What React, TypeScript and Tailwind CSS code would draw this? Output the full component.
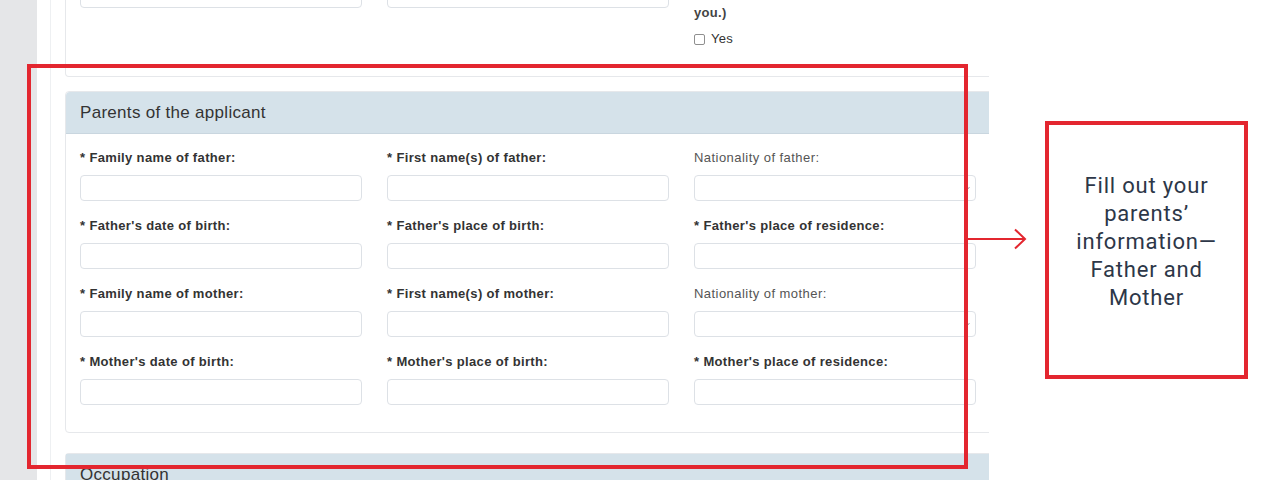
import React from "react";

type Field = {
    label: string;
    required?: boolean;
    select?: boolean;
};

const rows: Field[][] = [
    [
        { label: "Family name of father:", required: true },
        { label: "First name(s) of father:", required: true },
        { label: "Nationality of father:", select: true },
    ],
    [
        { label: "Father's date of birth:", required: true },
        { label: "Father's place of birth:", required: true },
        { label: "Father's place of residence:", required: true },
    ],
    [
        { label: "Family name of mother:", required: true },
        { label: "First name(s) of mother:", required: true },
        { label: "Nationality of mother:", select: true },
    ],
    [
        { label: "Mother's date of birth:", required: true },
        { label: "Mother's place of birth:", required: true },
        { label: "Mother's place of residence:", required: true },
    ],
];

function FormField({ label, required, select }: Field) {
    return (
        <div className="flex flex-col">
            <label
                className={
                    required
                        ? "h-[18px] text-[13px] leading-[18px] font-bold tracking-[0.35px] whitespace-nowrap text-[#333]"
                        : "h-[18px] text-[13px] leading-[18px] tracking-[0.45px] whitespace-nowrap text-[#555]"
                }
            >
                {required ? "* " : ""}
                {label}
            </label>
            <div className="relative mt-2 h-[26px] rounded-[4px] border border-[#dde1e6] bg-white">
                {select && (
                    <svg
                        className="absolute top-[10px] right-[5px]"
                        width="6"
                        height="5"
                        viewBox="0 0 6 5"
                    >
                        <path
                            d="M0.5 1 L3 4 L5.5 1"
                            fill="none"
                            stroke="#9aa0a6"
                            strokeWidth="1"
                        />
                    </svg>
                )}
            </div>
        </div>
    );
}

export default function App() {
    return (
        <div
            className="relative flex h-[480px] w-[1272px] overflow-hidden bg-white"
            style={{ fontFamily: '"Liberation Sans", Arial, sans-serif' }}
        >
            {/* side strip */}
            <div className="w-[37px] shrink-0 bg-[#e5e6e8]" />
            <div className="w-[13px] shrink-0" />
            <div className="flex w-[939px] shrink-0 flex-col overflow-hidden border-l border-[#eef0f2] pl-[14px]">
                {/* previous card (cut off) */}
                <div className="mt-[-61px] w-[940px] rounded-b-[4px] border border-t-0 border-[#e6e8eb]">
                    <div className="grid grid-cols-[282px_282px_282px] gap-x-[25px] px-[14px] pt-[43px]">
                        <div className="h-[26px] rounded-[4px] border border-[#dde1e6]" />
                        <div className="h-[26px] rounded-[4px] border border-[#dde1e6]" />
                        <div className="pt-[22px]">
                            <div className="text-[13px] leading-[18px] font-bold tracking-[0.3px] text-[#444]">
                                you.)
                            </div>
                            <div className="mt-[8px] flex items-center gap-[6px]">
                                <span className="h-[11px] w-[11px] rounded-[2px] border border-[#8f8f8f] bg-white" />
                                <span className="text-[13px] leading-[18px] tracking-[0.3px] text-[#333]">
                                    Yes
                                </span>
                            </div>
                        </div>
                    </div>
                    <div className="h-[28px]" />
                </div>

                {/* parents card */}
                <div className="mt-[14px] w-[940px] rounded-[4px] border border-[#e6e8eb]">
                    <div className="flex h-[42px] items-center rounded-t-[4px] border-b border-[#c9d6df] bg-[#d5e2ea] px-[14px] text-[17px] tracking-[0.3px] text-[#333]">
                        Parents of the applicant
                    </div>
                    <div className="flex flex-col gap-[16px] px-[14px] pt-[15px] pb-[27px]">
                        {rows.map((row, i) => (
                            <div
                                key={i}
                                className="grid grid-cols-[282px_282px_282px] gap-x-[25px]"
                            >
                                {row.map((f) => (
                                    <FormField key={f.label} {...f} />
                                ))}
                            </div>
                        ))}
                    </div>
                </div>

                {/* next card (cut off) */}
                <div className="mt-[20px] w-[940px] rounded-t-[4px] border border-b-0 border-[#e6e8eb]">
                    <div className="flex h-[42px] items-center bg-[#d5e2ea] px-[14px] text-[17px] tracking-[0.3px] text-[#333]">
                        Occupation
                    </div>
                </div>
            </div>

            {/* highlight */}
            <div className="absolute top-[64px] left-[27px] h-[405px] w-[941px] border-4 border-[#e3262f]" />
            <svg
                className="absolute top-[228px] left-[968px]"
                width="62"
                height="22"
                viewBox="0 0 62 22"
            >
                <path d="M0 11 H57" stroke="#e3262f" strokeWidth="2" />
                <path
                    d="M47 1.5 L57 11 L47 20.5"
                    fill="none"
                    stroke="#e3262f"
                    strokeWidth="2"
                />
            </svg>
            <div
                className="absolute top-[121px] left-[1045px] flex h-[258px] w-[203px] justify-center border-4 border-[#e3262f] px-[22px] pt-[47px] text-center text-[22px] leading-[28px] tracking-[0.8px] text-[#2d3748]"
                style={{ fontFamily: "Roboto, sans-serif" }}
            >
                Fill out your parents’ information— Father and Mother
            </div>
        </div>
    );
}
